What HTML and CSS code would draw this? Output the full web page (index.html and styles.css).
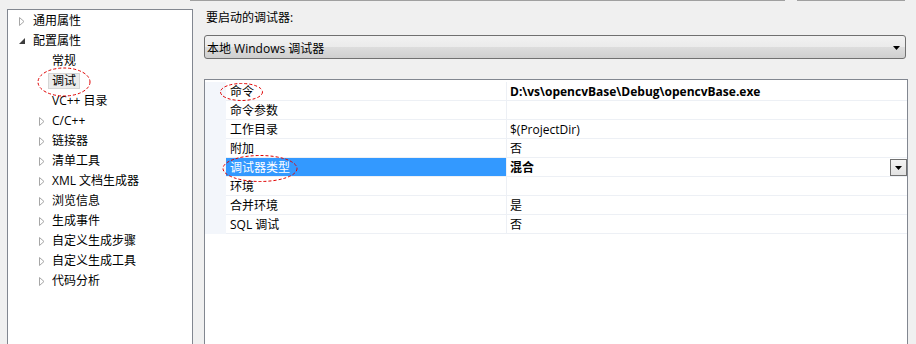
FILE: index.html
```html
<!DOCTYPE html>
<html lang="zh-CN">
<head>
  <meta charset="UTF-8" />
  <title>调试属性</title>
  <link rel="stylesheet" href="styles.css">
</head>
<body>
  <div class="frame-top"><span class="t1"></span><span class="t2"></span></div>

  <div class="main">
    <div class="tree">
      <div class="node lvl0"><span class="twisty"><svg width="6" height="9"><polygon points="0.5,0.5 5,4.5 0.5,8.5" fill="#fff" stroke="#a6a6a6"/></svg></span>通用属性</div>
      <div class="node lvl0"><span class="twisty"><svg width="6" height="6"><polygon points="6,0 6,6 0,6" fill="#3c3c3c"/></svg></span>配置属性</div>
      <div class="node lvl1"><span class="twisty"></span>常规</div>
      <div class="node lvl1"><span class="twisty"></span><span class="selected">调试</span></div>
      <div class="node lvl1"><span class="twisty"></span>VC++ 目录</div>
      <div class="node lvl1"><span class="twisty"><svg width="6" height="9"><polygon points="0.5,0.5 5,4.5 0.5,8.5" fill="#fff" stroke="#a6a6a6"/></svg></span>C/C++</div>
      <div class="node lvl1"><span class="twisty"><svg width="6" height="9"><polygon points="0.5,0.5 5,4.5 0.5,8.5" fill="#fff" stroke="#a6a6a6"/></svg></span>链接器</div>
      <div class="node lvl1"><span class="twisty"><svg width="6" height="9"><polygon points="0.5,0.5 5,4.5 0.5,8.5" fill="#fff" stroke="#a6a6a6"/></svg></span>清单工具</div>
      <div class="node lvl1"><span class="twisty"><svg width="6" height="9"><polygon points="0.5,0.5 5,4.5 0.5,8.5" fill="#fff" stroke="#a6a6a6"/></svg></span>XML 文档生成器</div>
      <div class="node lvl1"><span class="twisty"><svg width="6" height="9"><polygon points="0.5,0.5 5,4.5 0.5,8.5" fill="#fff" stroke="#a6a6a6"/></svg></span>浏览信息</div>
      <div class="node lvl1"><span class="twisty"><svg width="6" height="9"><polygon points="0.5,0.5 5,4.5 0.5,8.5" fill="#fff" stroke="#a6a6a6"/></svg></span>生成事件</div>
      <div class="node lvl1"><span class="twisty"><svg width="6" height="9"><polygon points="0.5,0.5 5,4.5 0.5,8.5" fill="#fff" stroke="#a6a6a6"/></svg></span>自定义生成步骤</div>
      <div class="node lvl1"><span class="twisty"><svg width="6" height="9"><polygon points="0.5,0.5 5,4.5 0.5,8.5" fill="#fff" stroke="#a6a6a6"/></svg></span>自定义生成工具</div>
      <div class="node lvl1"><span class="twisty"><svg width="6" height="9"><polygon points="0.5,0.5 5,4.5 0.5,8.5" fill="#fff" stroke="#a6a6a6"/></svg></span>代码分析</div>
    </div>

    <div class="right">
      <div class="label">要启动的调试器:</div>
      <div class="combo">
        <span>本地 Windows 调试器</span>
        <svg width="7" height="4"><polygon points="0,0 7,0 3.5,4" fill="#000"/></svg>
      </div>

      <div class="grid">
        <div class="row"><span class="gutter"></span><span class="name">命令</span><span class="value bold">D:\vs\opencvBase\Debug\opencvBase.exe</span></div>
        <div class="row"><span class="gutter"></span><span class="name">命令参数</span><span class="value"></span></div>
        <div class="row"><span class="gutter"></span><span class="name">工作目录</span><span class="value">$(ProjectDir)</span></div>
        <div class="row"><span class="gutter"></span><span class="name">附加</span><span class="value">否</span></div>
        <div class="row"><span class="gutter"></span><span class="name sel">调试器类型</span><span class="value bold">混合<span class="drop"><svg width="7" height="4"><polygon points="0,0 7,0 3.5,4" fill="#000"/></svg></span></span></div>
        <div class="row"><span class="gutter"></span><span class="name">环境</span><span class="value"></span></div>
        <div class="row"><span class="gutter"></span><span class="name">合并环境</span><span class="value">是</span></div>
        <div class="row"><span class="gutter"></span><span class="name">SQL 调试</span><span class="value">否</span></div>
      </div>
    </div>
  </div>

  <!-- red hand-drawn marks over the dialog -->
  <svg class="mark mark-1" width="54" height="30"><ellipse cx="27" cy="15" rx="26" ry="14" fill="none" stroke="#e00000" stroke-dasharray="3 2"/></svg>
  <svg class="mark mark-2" width="45" height="20"><ellipse cx="22.5" cy="10" rx="21" ry="8.5" fill="none" stroke="#e00000" stroke-dasharray="3 2"/></svg>
  <svg class="mark mark-3" width="76" height="29"><ellipse cx="38" cy="14.5" rx="37" ry="13" fill="none" stroke="#e00000" stroke-dasharray="3 2"/></svg>
</body>
</html>
```

FILE: styles.css
```css
* {
  box-sizing: border-box;
}
body {
  margin: 0;
  width: 916px;
  height: 344px;
  overflow: hidden;
  position: relative;
  background-color: #f0f0f0;
  font-family: "Open Sans", "Noto Sans CJK SC", sans-serif;
  font-size: 12px;
  color: #000;
}
.frame-top {
  display: flex;
  gap: 12px;
  height: 1px;
  padding-left: 190px;
}
.frame-top span {
  background-color: #a0a0a0;
}
.frame-top .t1 {
  width: 595px;
}
.frame-top .t2 {
  width: 108px;
}
.main {
  display: flex;
  padding: 8px 0 0 7px;
}

/* tree */
.tree {
  width: 186px;
  height: 335px;
  padding-top: 1px;
  background-color: #fff;
  border: 1px solid #828790;
  border-bottom: none;
}
.node {
  display: flex;
  align-items: center;
  height: 20px;
  line-height: 20px;
  white-space: nowrap;
}
.lvl0 {
  padding-left: 11px;
}
.lvl1 {
  padding-left: 31px;
}
.twisty {
  width: 14px;
  height: 20px;
  display: flex;
  align-items: center;
}
.lvl1 .twisty {
  width: 13px;
}
.selected {
  margin-left: -4px;
  padding: 0 3px;
  line-height: 14px;
  background-color: #ebebeb;
  border: 1px solid #d6d6d6;
}

/* right side */
.right {
  margin-left: 11px;
  width: 704px;
}
.label {
  height: 17px;
  line-height: 16px;
  padding: 1px 0 0 2px;
}
.combo {
  margin-top: 9px;
  width: 702px;
  height: 24px;
  display: flex;
  align-items: center;
  justify-content: space-between;
  padding: 2px 5px 0 2px;
  border: 1px solid #707070;
  border-radius: 3px;
  background: linear-gradient(#f2f2f2, #ebebeb 50%, #dddddd 50%, #cfcfcf);
}
.grid {
  margin-top: 20px;
  width: 704px;
  height: 265px;
  padding-top: 2px;
  background-color: #fff;
  border: 1px solid #828790;
  border-bottom: none;
}
.row {
  display: flex;
  height: 19px;
}
.gutter {
  width: 21px;
  background-color: #f3f6fb;
}
.name {
  width: 280px;
  padding-left: 4px;
  line-height: 20px;
  border-bottom: 1px solid #edf0f5;
  white-space: nowrap;
}
.name.sel {
  background-color: #3399ff;
  color: #fff;
}
.value {
  flex: 1;
  display: flex;
  align-items: center;
  justify-content: space-between;
  padding: 1px 0 0 3px;
  line-height: 18px;
  border-left: 1px solid #edf0f5;
  border-bottom: 1px solid #edf0f5;
  white-space: nowrap;
}
.bold {
  font-weight: bold;
}
.drop {
  width: 17px;
  height: 17px;
  display: flex;
  align-items: center;
  justify-content: center;
  border: 1px solid #707070;
  background: linear-gradient(#f4f4f4, #e2e2e2);
}

/* annotation ellipses */
.mark {
  position: absolute;
}
.mark-1 {
  left: 37px;
  top: 67px;
}
.mark-2 {
  left: 219px;
  top: 82px;
}
.mark-3 {
  left: 222px;
  top: 154px;
}
```
